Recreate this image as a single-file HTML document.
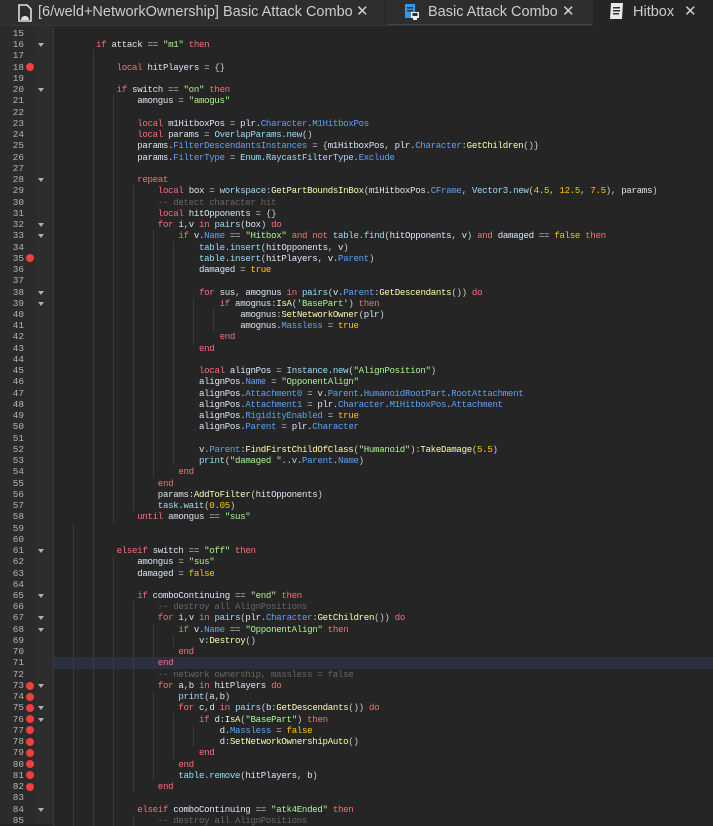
<!DOCTYPE html>
<html><head><meta charset="utf-8">
<style>
*{margin:0;padding:0;box-sizing:border-box}
body{width:713px;height:824px;overflow:hidden;background:#252525;position:relative;font-family:"Liberation Sans",sans-serif}
#tabs{position:absolute;left:0;top:0;width:713px;height:26px;background:#2e2e2e;border-bottom:1px solid #353535}
.tab{position:absolute;top:0;height:25px;color:#cccccc;font-size:14.5px;line-height:24px;white-space:nowrap}
.x{position:absolute;top:0;font-size:15px;color:#d0d0d0}
#gut{position:absolute;left:0;top:26px;width:36px;height:798px;background:#2b2b2b}
#fold{position:absolute;left:36px;top:26px;width:17px;height:798px;background:#2d2d2d}
#code{position:absolute;left:0;top:28px;width:713px}
.ln{position:absolute;left:0;width:713px;height:11.24px;font-family:"Liberation Mono",monospace;font-size:9.1px;letter-spacing:-0.31px;line-height:11.24px;white-space:pre}
.num{position:absolute;left:0;width:24px;text-align:right;color:#b4b4b4;font-size:9.4px;letter-spacing:0}
.t{position:absolute;left:54.8px;color:#cccccc}
.bp{position:absolute;left:26px;top:1.6px;width:8px;height:8px;border-radius:50%;background:#f33e3e}
.fa{position:absolute;left:38px;top:4px;width:0;height:0;border-left:3px solid transparent;border-right:3px solid transparent;border-top:4px solid #b0b0b0}
.g{position:absolute;top:0;width:1px;height:11.24px;background:#3a3a3a}
.hl{position:absolute;left:53px;top:0;width:660px;height:11.24px;background:#2a303d}
.k{color:#f86d7c}.s{color:#adf195}.n{color:#ffc600}.c{color:#666666}.b{color:#9cdcf7}.p{color:#61a1f1}.m{color:#fdfbac}.i{color:#dce6f5}
</style></head><body>
<div id="tabs">
 <div class="tab" style="left:0;width:386px;border-right:1px solid #222">
  <svg style="position:absolute;left:17px;top:4px" width="16" height="18" viewBox="0 0 16 18"><path d="M2 1h8l4 4v12H2z" fill="none" stroke="#ddd" stroke-width="1.6"/><path d="M4 16c0-3 2-4 4-4s4 1 4 4z" fill="#ddd"/></svg>
  <span style="position:absolute;left:38px">[6/weld+NetworkOwnership] Basic Attack Combo</span>
  <span class="x" style="left:356px">✕</span>
 </div>
 <div class="tab" style="left:387px;width:205px;border-bottom:1px solid #444">
  <svg style="position:absolute;left:17px;top:3px" width="16" height="18" viewBox="0 0 16 18"><rect x="1" y="1" width="10" height="14" fill="#2f9bf0"/><rect x="3" y="4" width="6" height="1.5" fill="#2e2e2e"/><rect x="3" y="7" width="6" height="1.5" fill="#2e2e2e"/><rect x="7" y="9" width="8" height="6" fill="#eee"/><rect x="9" y="15" width="4" height="2" fill="#eee"/><rect x="8.5" y="10" width="5" height="3" fill="#2e2e2e"/></svg>
  <span style="position:absolute;left:41px">Basic Attack Combo</span>
  <span class="x" style="left:175px">✕</span>
 </div>
 <div class="tab" style="left:593px;width:120px;height:27px;background:#252525">
  <svg style="position:absolute;left:15px;top:2px" width="17" height="18" viewBox="0 0 17 18"><path d="M3 1h12l-1 16H2z" fill="#e8e8e8"/><rect x="5" y="5" width="7" height="1.5" fill="#333"/><rect x="5" y="8" width="7" height="1.5" fill="#333"/><rect x="5" y="11" width="6" height="1.5" fill="#333"/></svg>
  <span style="position:absolute;left:40px">Hitbox</span>
  <span class="x" style="left:91px">✕</span>
 </div>
</div>
<div id="gut"></div><div id="fold"></div>
<div id="code"></div>
<script>
var L=[
[0,""],[2,'if attack == "m1" then'],[0,""],[3,"local hitPlayers = {}"],[0,""],
[3,'if switch == "on" then'],[4,'amongus = "amogus"'],[0,""],
[4,"local m1HitboxPos = plr.Character.M1HitboxPos"],[4,"local params = OverlapParams.new()"],
[4,"params.FilterDescendantsInstances = {m1HitboxPos, plr.Character:GetChildren()}"],
[4,"params.FilterType = Enum.RaycastFilterType.Exclude"],[0,""],[4,"repeat"],
[5,"local box = workspace:GetPartBoundsInBox(m1HitboxPos.CFrame, Vector3.new(4.5, 12.5, 7.5), params)"],
[5,"-- detect character hit"],[5,"local hitOpponents = {}"],[5,"for i,v in pairs(box) do"],
[6,'if v.Name == "Hitbox" and not table.find(hitOpponents, v) and damaged == false then'],
[7,"table.insert(hitOpponents, v)"],[7,"table.insert(hitPlayers, v.Parent)"],[7,"damaged = true"],[0,""],
[7,"for sus, amognus in pairs(v.Parent:GetDescendants()) do"],[8,"if amognus:IsA('BasePart') then"],
[9,"amognus:SetNetworkOwner(plr)"],[9,"amognus.Massless = true"],[8,"end"],[7,"end"],[0,""],
[7,'local alignPos = Instance.new("AlignPosition")'],[7,'alignPos.Name = "OpponentAlign"'],
[7,"alignPos.Attachment0 = v.Parent.HumanoidRootPart.RootAttachment"],
[7,"alignPos.Attachment1 = plr.Character.M1HitboxPos.Attachment"],
[7,"alignPos.RigidityEnabled = true"],[7,"alignPos.Parent = plr.Character"],[0,""],
[7,'v.Parent:FindFirstChildOfClass("Humanoid"):TakeDamage(5.5)'],[7,'print("damaged "..v.Parent.Name)'],
[6,"end"],[5,"end"],[5,"params:AddToFilter(hitOpponents)"],[5,"task.wait(0.05)"],[4,'until amongus == "sus"'],
[0,""],[0,""],[3,'elseif switch == "off" then'],[4,'amongus = "sus"'],[4,"damaged = false"],[0,""],
[4,'if comboContinuing == "end" then'],[5,"-- destroy all AlignPositions"],
[5,"for i,v in pairs(plr.Character:GetChildren()) do"],[6,'if v.Name == "OpponentAlign" then'],
[7,"v:Destroy()"],[6,"end"],[5,"end"],[5,"-- network ownership, massless = false"],
[5,"for a,b in hitPlayers do"],[6,"print(a,b)"],[6,"for c,d in pairs(b:GetDescendants()) do"],
[7,'if d:IsA("BasePart") then'],[8,"d.Massless = false"],[8,"d:SetNetworkOwnershipAuto()"],
[7,"end"],[6,"end"],[6,"table.remove(hitPlayers, b)"],[5,"end"],[0,""],
[4,'elseif comboContinuing == "atk4Ended" then'],[5,"-- destroy all AlignPositions"]];
var KW="local if then end for in do and not repeat until elseif else function return while".split(" ");
var BI="print pairs table Instance Vector3 Enum task workspace OverlapParams".split(" ");
function esc(s){return s.replace(/&/g,"&amp;").replace(/</g,"&lt;")}
function hl(s){
 if(s.trim().indexOf("--")==0)return '<span class="c">'+esc(s)+'</span>';
 var o="",re=/("[^"]*"|'[^']*'|\d+(\.\d+)?|[A-Za-z_][A-Za-z0-9_]*|.)/g,m,prev="",prevW="";
 while((m=re.exec(s))){var t=m[0],c=null;
  if(/^["']/.test(t))c="s";
  else if(/^\d/.test(t))c="n";
  else if(/^[A-Za-z_]/.test(t)){
   if(KW.indexOf(t)>=0)c="k";else if(t=="true"||t=="false"||t=="nil")c="n";
   else if(prev==":")c="m";
   else if(prev=="."){c=(BI.indexOf(prevW)>=0)?"b":"p";}
   else if(BI.indexOf(t)>=0)c="b";else c="i";
   prevW=t;}
  o+=c?'<span class="'+c+'">'+esc(t)+'</span>':esc(t);
  if(t!=" ")prev=t;}
 return o;}
var BP=[18,35,73,74,75,76,77,78,79,80,81,82],FA=[16,20,28,32,33,38,39,61,65,67,68,73,75,76,84];
var h="",lh=11.24;
for(var j=0;j<L.length;j++){var n=15+j,lv=L[j][0],tx=L[j][1];
 if(!tx){for(var q=j+1;q<L.length;q++)if(L[q][1]){lv=L[q][0];break;}}
 var r='<div class="ln" style="top:'+(j*lh).toFixed(2)+'px">';
 if(n==71)r+='<div class="hl"></div>';
 for(var k=0;k<lv;k++){if(k==1&&n<59)continue;r+='<div class="g" style="left:'+(53+20*k)+'px"></div>';}
 r+='<span class="num">'+n+'</span>';
 if(BP.indexOf(n)>=0)r+='<div class="bp"></div>';
 if(FA.indexOf(n)>=0)r+='<div class="fa"></div>';
 if(tx)r+='<span class="t" style="left:'+(54.8+20.6*L[j][0])+'px">'+hl(tx)+'</span>';
 r+='</div>';h+=r;}
document.getElementById("code").innerHTML=h;
</script>
</body></html>
